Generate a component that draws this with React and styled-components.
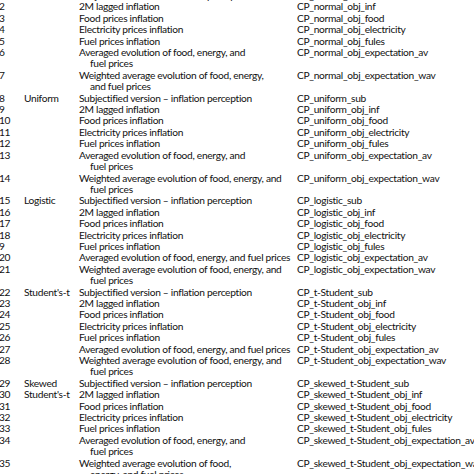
import React from "react";
import styled, { createGlobalStyle } from "styled-components";

const GlobalStyle = createGlobalStyle`
  html, body {
    margin: 0;
    padding: 0;
    background: #ffffff;
  }
  body {
    width: 474px;
    height: 474px;
    overflow: hidden;
  }
`;

const Page = styled.div`
  width: 474px;
  height: 474px;
  overflow: hidden;
  background: #ffffff;
`;

const Table = styled.div`
  display: grid;
  grid-template-columns: 25px 55px 218px 1fr;
  margin-top: -10px;
  margin-left: -1px;
  font-family: Lato, "Liberation Sans", sans-serif;
  font-size: 10.2px;
  letter-spacing: -0.3px;
  line-height: 11.4px;
  color: #111;
  white-space: nowrap;
`;

const Cell = styled.div`
  align-self: start;
`;

const Desc = styled.div`
  align-self: start;
  padding-left: 11px;
  text-indent: -11px;
`;

const rows = [
  [1, "Normal", ["Subjectified version – inflation perception"], "CP_normal_sub"],
  [2, "", ["2M lagged inflation"], "CP_normal_obj_inf"],
  [3, "", ["Food prices inflation"], "CP_normal_obj_food"],
  [4, "", ["Electricity prices inflation"], "CP_normal_obj_electricity"],
  [5, "", ["Fuel prices inflation"], "CP_normal_obj_fules"],
  [6, "", ["Averaged evolution of food, energy, and", "fuel prices"], "CP_normal_obj_expectation_av"],
  [7, "", ["Weighted average evolution of food, energy,", "and fuel prices"], "CP_normal_obj_expectation_wav"],
  [8, "Uniform", ["Subjectified version – inflation perception"], "CP_uniform_sub"],
  [9, "", ["2M lagged inflation"], "CP_uniform_obj_inf"],
  [10, "", ["Food prices inflation"], "CP_uniform_obj_food"],
  [11, "", ["Electricity prices inflation"], "CP_uniform_obj_electricity"],
  [12, "", ["Fuel prices inflation"], "CP_uniform_obj_fules"],
  [13, "", ["Averaged evolution of food, energy, and", "fuel prices"], "CP_uniform_obj_expectation_av"],
  [14, "", ["Weighted average evolution of food, energy, and", "fuel prices"], "CP_uniform_obj_expectation_wav"],
  [15, "Logistic", ["Subjectified version – inflation perception"], "CP_logistic_sub"],
  [16, "", ["2M lagged inflation"], "CP_logistic_obj_inf"],
  [17, "", ["Food prices inflation"], "CP_logistic_obj_food"],
  [18, "", ["Electricity prices inflation"], "CP_logistic_obj_electricity"],
  [9, "", ["Fuel prices inflation"], "CP_logistic_obj_fules"],
  [20, "", ["Averaged evolution of food, energy, and fuel prices"], "CP_logistic_obj_expectation_av"],
  [21, "", ["Weighted average evolution of food, energy, and", "fuel prices"], "CP_logistic_obj_expectation_wav"],
  [22, "Student's-t", ["Subjectified version – inflation perception"], "CP_t-Student_sub"],
  [23, "", ["2M lagged inflation"], "CP_t-Student_obj_inf"],
  [24, "", ["Food prices inflation"], "CP_t-Student_obj_food"],
  [25, "", ["Electricity prices inflation"], "CP_t-Student_obj_electricity"],
  [26, "", ["Fuel prices inflation"], "CP_t-Student_obj_fules"],
  [27, "", ["Averaged evolution of food, energy, and fuel prices"], "CP_t-Student_obj_expectation_av"],
  [28, "", ["Weighted average evolution of food, energy, and", "fuel prices"], "CP_t-Student_obj_expectation_wav"],
  [29, "Skewed", ["Subjectified version – inflation perception"], "CP_skewed_t-Student_sub"],
  [30, "Student's-t", ["2M lagged inflation"], "CP_skewed_t-Student_obj_inf"],
  [31, "", ["Food prices inflation"], "CP_skewed_t-Student_obj_food"],
  [32, "", ["Electricity prices inflation"], "CP_skewed_t-Student_obj_electricity"],
  [33, "", ["Fuel prices inflation"], "CP_skewed_t-Student_obj_fules"],
  [34, "", ["Averaged evolution of food, energy, and", "fuel prices"], "CP_skewed_t-Student_obj_expectation_av"],
  [35, "", ["Weighted average evolution of food,", "energy, and fuel prices"], "CP_skewed_t-Student_obj_expectation_wav"],
];

export default function App() {
  return (
    <Page>
      <GlobalStyle />
      <Table>
        {rows.map(([num, dist, desc, code], i) => (
          <React.Fragment key={i}>
            <Cell>{num}</Cell>
            <Cell>{dist}</Cell>
            <Desc>
              {desc.map((line, j) => (
                <React.Fragment key={j}>
                  {j > 0 && <br />}
                  {line}
                </React.Fragment>
              ))}
            </Desc>
            <Cell>{code}</Cell>
          </React.Fragment>
        ))}
      </Table>
    </Page>
  );
}
